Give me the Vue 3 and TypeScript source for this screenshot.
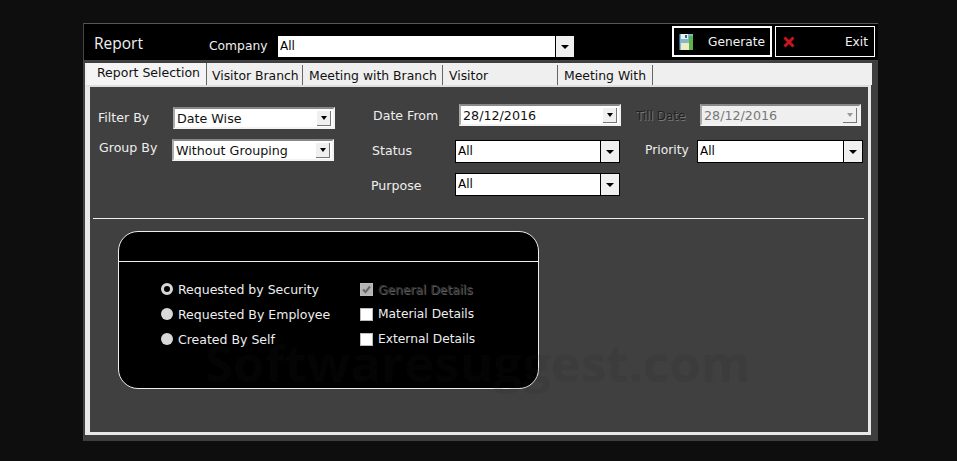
<script setup lang="ts">
const tabs = [
  { name: 'Report Selection', w: 120, pad: 10, active: true },
  { name: 'Visitor Branch', w: 96, pad: 5, active: false },
  { name: 'Meeting with Branch', w: 140, pad: 6, active: false },
  { name: 'Visitor', w: 115, pad: 6, active: false },
  { name: 'Meeting With', w: 95, pad: 6, active: false }
]
const radios = [
  { label: 'Requested by Security', on: true },
  { label: 'Requested By Employee', on: false },
  { label: 'Created By Self', on: false }
]
const checks = [
  { label: 'General Details', on: true, off: true },
  { label: 'Material Details', on: false, off: false },
  { label: 'External Details', on: false, off: false }
]
</script>

<template>
  <div class="page">
    <div class="window">
      <header class="top">
        <div class="title">Report</div>
        <div class="company">
          <span class="company-label">Company</span>
          <div class="flat-select company-select">
            <span class="flat-value">All</span>
            <span class="flat-btn"><i class="arrow"></i></span>
          </div>
        </div>
        <button class="btn btn-gen">
          <svg width="14" height="16" viewBox="0 0 14 16">
            <rect x="0" y="0" width="14" height="16" fill="#7fb7cf" />
            <rect x="2" y="0" width="7" height="5" fill="#e8f0f2" />
            <rect x="6" y="1" width="2" height="3" fill="#3a6a86" />
            <rect x="2" y="9" width="8" height="7" fill="#f1ecc0" />
            <rect x="10" y="2" width="4" height="14" fill="#5fb24a" />
            <rect x="0" y="0" width="1" height="16" fill="#2f5f7c" />
          </svg>
          <span>Generate</span>
        </button>
        <button class="btn btn-exit">
          <svg width="12" height="12" viewBox="0 0 12 12">
            <path d="M1.5 1.5 L10.5 10.5 M10.5 1.5 L1.5 10.5" stroke="#c8161c" stroke-width="3" />
          </svg>
          <span>Exit</span>
        </button>
      </header>

      <nav class="tabs">
        <div v-for="t in tabs" :key="t.name" class="tab" :class="{ active: t.active }" :style="{ width: t.w + 'px', paddingLeft: t.pad + 'px' }">{{ t.name }}</div>
      </nav>

      <main class="panel">
        <section class="form">
          <div class="col col-a">
            <div class="row row-filter">
              <label class="lbl lbl-a">Filter By</label>
              <div class="sunken w-a"><span>Date Wise</span><b class="sbtn"><i class="arrow small"></i></b></div>
            </div>
            <div class="row row-group">
              <label class="lbl lbl-a2">Group By</label>
              <div class="sunken w-a"><span>Without Grouping</span><b class="sbtn"><i class="arrow small"></i></b></div>
            </div>
          </div>
          <div class="col col-b">
            <div class="row row-from">
              <label class="lbl lbl-from">Date From</label>
              <div class="sunken w-b"><span>28/12/2016</span><b class="sbtn"><i class="arrow small"></i></b></div>
            </div>
            <div class="row row-status">
              <label class="lbl lbl-status">Status</label>
              <div class="flat-select w-c w-narrow"><span class="flat-value">All</span><span class="flat-btn"><i class="arrow"></i></span></div>
            </div>
            <div class="row row-purpose">
              <label class="lbl lbl-purpose">Purpose</label>
              <div class="flat-select w-c w-narrow"><span class="flat-value">All</span><span class="flat-btn"><i class="arrow"></i></span></div>
            </div>
          </div>
          <div class="col col-c">
            <div class="row row-till">
              <label class="lbl lbl-till">Till Date</label>
              <div class="sunken w-till disabled"><span>28/12/2016</span><b class="sbtn"><i class="arrow small"></i></b></div>
            </div>
            <div class="row row-priority">
              <label class="lbl lbl-priority">Priority</label>
              <div class="flat-select w-c"><span class="flat-value">All</span><span class="flat-btn"><i class="arrow"></i></span></div>
            </div>
          </div>
        </section>

        <hr class="rule" />

        <section class="card">
          <div class="card-head"></div>
          <div class="card-body">
            <div class="radios">
              <div v-for="r in radios" :key="r.label" class="opt">
                <span class="radio" :class="{ on: r.on }"></span>
                <span>{{ r.label }}</span>
              </div>
            </div>
            <div class="checks">
              <div v-for="c in checks" :key="c.label" class="opt" :class="{ off: c.off }">
                <span class="check">
                  <svg v-if="c.on" width="11" height="11" viewBox="0 0 11 11"><path d="M2 5.5 L4.5 8 L9 2.5" fill="none" stroke="#666" stroke-width="2" /></svg>
                </span>
                <span class="opt-text">{{ c.label }}</span>
              </div>
            </div>
          </div>
        </section>
      </main>
      <div class="watermark">Softwaresuggest.com</div>
    </div>
  </div>
</template>

<style>
html, body { margin: 0; background: #0e0e0e; }
</style>

<style scoped>
.page {
  width: 957px;
  height: 461px;
  box-sizing: border-box;
  padding: 23px 79px 20px 83px;
  background: #0e0e0e;
  font-family: "DejaVu Sans", "Liberation Sans", sans-serif;
  overflow: hidden;
}
.window {
  position: relative;
  width: 795px;
  height: 418px;
  box-sizing: border-box;
  background: #3e3e3e;
  border-top: 1px solid #555;
  border-left: 1px solid #444;
}
.top {
  height: 37px;
  box-sizing: border-box;
  background: #000;
  display: flex;
  align-items: flex-start;
  border-bottom: 1px solid #444;
}
.title {
  width: 125px;
  padding: 9px 0 0 10px;
  box-sizing: border-box;
  color: #f0f0f0;
  font: 15.5px/20px "Open Sans", sans-serif;
}
.company { display: flex; align-items: flex-start; padding-top: 12px; height: 24px; }
.company-label {
  width: 69px;
  color: #eee;
  font-size: 12.3px;
  line-height: 20px;
}
.company-select { width: 296px; height: 21px; }
.flat-select {
  display: flex;
  background: #fff;
  color: #000;
  box-sizing: border-box;
}
.flat-value {
  flex: 1;
  padding-left: 2px;
  font-size: 12px;
  line-height: 21px;
  border-right: 1px solid #000;
}
.flat-btn {
  width: 18px;
  background: #f0f0f0;
  display: flex;
  align-items: center;
  justify-content: center;
}
.arrow {
  display: block;
  width: 0;
  height: 0;
  border-left: 4px solid transparent;
  border-right: 4px solid transparent;
  border-top: 4px solid #000;
}
.arrow.small { border-left-width: 3px; border-right-width: 3px; }
.btn {
  height: 31px;
  margin-top: 2px;
  box-sizing: border-box;
  background: #000;
  color: #f2f2f2;
  font: 12.2px "DejaVu Sans", sans-serif;
  display: flex;
  align-items: center;
  justify-content: space-between;
}
.btn-gen { width: 100px; margin-left: 98px; border: 2px solid #fff; padding: 0 5px 0 5px; }
.btn-exit { width: 100px; margin-left: 3px; border: 1px solid #fff; padding: 0 6px 0 7px; }
.tabs {
  margin: 2px 0 0 1px;
  width: 787px;
  height: 22px;
  box-sizing: border-box;
  background: #efefef;
  display: flex;
  padding-left: 2px;
}
.tab {
  box-sizing: border-box;
  height: 20px;
  margin-top: 2px;
  font-size: 12.4px;
  line-height: 21px;
  color: #111;
  border-right: 1px solid #666;
  white-space: nowrap;
}
.tab.active { height: 22px; margin-top: 0; line-height: 20px; background: #f4f4f4; font-size: 12.5px; }
.panel {
  margin-left: 1px;
  width: 786px;
  height: 350px;
  box-sizing: border-box;
  background: #404040;
  border: 3px solid #e8e8e8;
  border-top: 2px solid #ddd;
  border-left-width: 5px;
}
.form { display: flex; height: 131px; box-sizing: border-box; padding-left: 2px; }
.col { display: flex; flex-direction: column; flex: none; }
.col-a { width: 273px; }
.col-b { width: 266px; }
.row { display: flex; align-items: center; }
.lbl { color: #eee; font-size: 12.6px; line-height: 20px; white-space: nowrap; flex: none; }
.row-filter { margin-top: 20px; height: 22px; }
.row-group { margin-top: 10px; height: 22px; }
.lbl-a { width: 74px; padding-left: 6px; margin-bottom: 1px; }
.lbl-a2 { width: 72px; padding-left: 7px; margin-bottom: 4px; }
.sunken {
  box-sizing: border-box;
  height: 22px;
  display: flex;
  align-items: center;
  justify-content: space-between;
  background: #fff;
  color: #111;
  font-size: 12.7px;
  padding: 0 2px 0 2px;
  border-top: 2px solid #888;
  border-left: 2px solid #aaa;
  border-right: 2px solid #f2f2f2;
  border-bottom: 2px solid #f2f2f2;
}
.sbtn {
  width: 14px;
  height: 15px;
  background: #f0f0f0;
  border-right: 1px solid #777;
  border-bottom: 1px solid #777;
  box-sizing: border-box;
  display: flex;
  align-items: center;
  justify-content: center;
}
.w-a { width: 162px; }
.w-b { width: 162px; }
.w-till { width: 161px; }
.w-c { width: 166px; height: 23px; border: 1px solid #000; }
.w-narrow { width: 165px; }
.col-a .w-a { margin-left: 1px; }
.row-from { margin-top: 17px; height: 22px; }
.lbl-from { width: 86px; padding-left: 8px; margin-top: 1px; }
.row-status { margin-top: 14px; height: 23px; }
.lbl-status { width: 83px; padding-left: 7px; margin-bottom: 2px; }
.row-purpose { margin-top: 10px; height: 23px; }
.lbl-purpose { width: 84px; padding-left: 6px; margin-top: 3px; }
.row-till { margin-top: 17px; height: 22px; }
.lbl-till { width: 64px; padding-left: 5px; margin-top: 1px; font-size: 12px; color: #222; text-shadow: 1px 1px 0 #777; }
.disabled { background: #efefef; color: #777; }
.disabled .arrow { border-top-color: #999; }
.row-priority { margin-top: 14px; height: 23px; }
.lbl-priority { width: 52px; padding-left: 14px; margin-bottom: 4px; font-size: 12.3px; }
.rule { margin: 0 0 0 3px; width: 771px; height: 1px; border: 0; background: #eee; }
.card {
  margin: 12px 0 0 28px;
  width: 421px;
  height: 158px;
  box-sizing: border-box;
  background: #000;
  border: 1px solid #eee;
  border-radius: 20px;
  overflow: hidden;
}
.card-head { height: 29px; border-bottom: 1px solid #eee; }
.card-body { display: flex; padding: 17px 0 0 42px; }
.radios { width: 199px; display: flex; flex-direction: column; gap: 5px; }
.checks { display: flex; flex-direction: column; gap: 5px; font-size: 12.2px; }
.opt {
  display: flex;
  align-items: center;
  height: 20px;
  color: #eee;
  font-size: 12.5px;
  white-space: nowrap;
}
.checks .opt { font-size: 12.25px; }
.radio {
  width: 12px;
  height: 12px;
  margin-right: 5px;
  border-radius: 50%;
  background: #d8d8d8;
  box-sizing: border-box;
  flex: none;
}
.radio.on { background: #000; border: 3px solid #d8d8d8; }
.check {
  width: 13px;
  height: 13px;
  margin-right: 5px;
  background: #fff;
  box-sizing: border-box;
  border: 1px solid #bbb;
  display: flex;
  flex: none;
}
.off .check { background: #b4b4b4; }
.off .opt-text { color: #333; text-shadow: 1px 1px 0 #5a5a5a; margin-top: 1px; }
.watermark {
  position: absolute;
  left: 121px;
  top: 318px;
  font: bold 51px/41px "Open Sans", sans-serif;
  color: rgba(30, 30, 30, 0.12);
  pointer-events: none;
  white-space: nowrap;
}
</style>
